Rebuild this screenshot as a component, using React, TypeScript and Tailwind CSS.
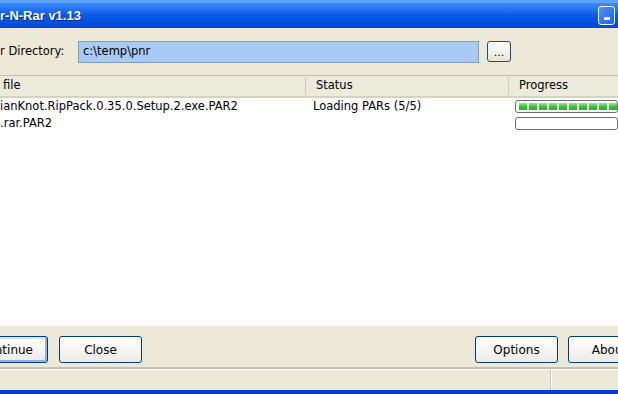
export default function App() {
  const blocks = Array.from({ length: 11 });
  return (
    <div className="w-[618px] h-[394px] overflow-hidden bg-[#ECE9D8] flex flex-col text-[11.5px] text-black font-['DejaVu_Sans',sans-serif]">
      {/* Title bar */}
      <div className="h-[28px] shrink-0 flex items-center justify-between bg-gradient-to-b from-[#3E8BF7] via-[#0659E6] to-[#0348D4] border-t-[3px] border-[#5CA2FB]">
        <span className="text-white font-bold text-[13px] font-['Liberation_Sans',sans-serif] [text-shadow:1px_1px_0_#0A2A8A]">
          r-N-Rar v1.13
        </span>
        <div className="mr-[3px] w-[17px] h-[19px] rounded-[3px] border border-white bg-gradient-to-br from-[#4F93F9] to-[#1E5FE0] flex items-end justify-center pb-[4px]">
          <div className="w-[6px] h-[3px] bg-white" />
        </div>
      </div>

      {/* Directory row */}
      <div className="h-[47px] shrink-0 flex items-center">
        <span className="w-[78px] shrink-0">r Directory:</span>
        <div className="w-[401px] h-[22px] bg-[#A9CAF5] border border-[#7F9DB9] flex items-center px-[4px]">
          c:\temp\pnr
        </div>
        <button className="ml-[8px] w-[24px] h-[21px] rounded-[3px] border border-[#1C4E85] bg-gradient-to-b from-white to-[#E6E4DA] flex items-end justify-center pb-[3px] leading-none text-[11px]">
          ...
        </button>
      </div>

      {/* List view */}
      <div className="h-[251px] shrink-0 bg-white border-t border-[#C3C0B0] flex flex-col">
        <div className="h-[22px] shrink-0 flex items-center bg-[#EBEADB] border-b-[2px] border-[#D6D2C2]">
          <div className="w-[306px] pl-[3px] border-r border-[#CFCBBA]">file</div>
          <div className="w-[203px] pl-[10px] border-r border-[#CFCBBA]">Status</div>
          <div className="flex-1 pl-[10px]">Progress</div>
        </div>
        <div className="h-[17px] flex items-center">
          <div className="w-[306px] whitespace-nowrap">ianKnot.RipPack.0.35.0.Setup.2.exe.PAR2</div>
          <div className="w-[209px] pl-[7px] whitespace-nowrap">Loading PARs (5/5)</div>
          <div className="flex-1 h-[13px] rounded-[3px] border border-[#6E6E6E] flex items-center gap-[2px] pl-[3px] overflow-hidden">
            {blocks.map((_, i) => (
              <div key={i} className="w-[8px] h-[7px] shrink-0 bg-gradient-to-b from-[#8CEB8C] via-[#2ECC2E] to-[#27B527]" />
            ))}
          </div>
        </div>
        <div className="h-[17px] flex items-center">
          <div className="w-[515px] whitespace-nowrap">.rar.PAR2</div>
          <div className="flex-1 h-[13px] rounded-[3px] border border-[#6E6E6E]" />
        </div>
      </div>

      {/* Buttons */}
      <div className="h-[41px] shrink-0 flex items-start pt-[10px]">
        <button className="-ml-[36px] w-[84px] h-[27px] rounded-[3px] border border-[#003C74] bg-gradient-to-b from-white to-[#ECEBE6] shadow-[inset_-2px_-2px_0_#97AEE2,inset_2px_2px_0_#CEE7FF] text-[12px]">
          Continue
        </button>
        <button className="ml-[11px] w-[83px] h-[27px] rounded-[3px] border border-[#003C74] bg-gradient-to-b from-white to-[#ECEBE6] text-[12px]">
          Close
        </button>
        <button className="ml-auto w-[83px] h-[27px] rounded-[3px] border border-[#003C74] bg-gradient-to-b from-white to-[#ECEBE6] text-[12px]">
          Options
        </button>
        <button className="ml-[10px] -mr-[33px] w-[83px] h-[27px] rounded-[3px] border border-[#003C74] bg-gradient-to-b from-white to-[#ECEBE6] text-[12px] shrink-0">
          About
        </button>
      </div>

      {/* Status bar */}
      <div className="flex-1 flex border-t-[2px] border-[#C5C2B2] shadow-[inset_0_1px_0_#FFFFFF] bg-[#ECE9D8]">
        <div className="w-[551px] border-r border-[#CAC7B6]" />
        <div className="flex-1 border-l border-white" />
      </div>
      <div className="h-[4px] shrink-0 bg-[#0B3BD6]" />
    </div>
  );
}
